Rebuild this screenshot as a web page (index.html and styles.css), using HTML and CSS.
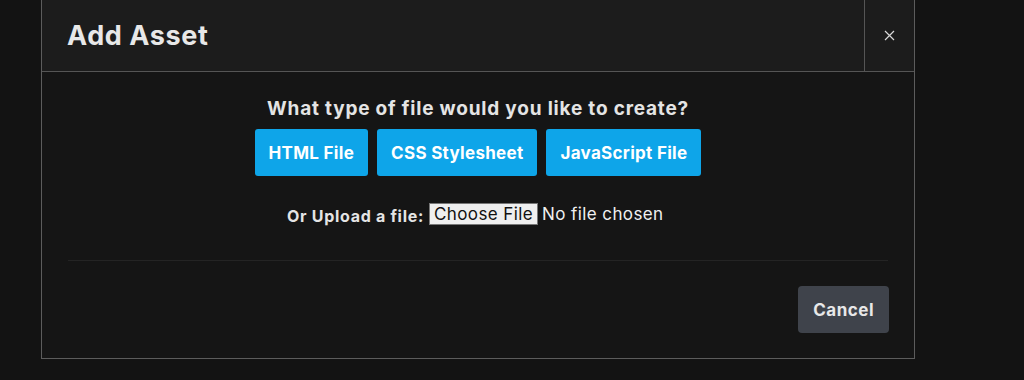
FILE: index.html
```html
<!DOCTYPE html>
<html lang="en">
<head>
  <meta charset="UTF-8">
  <title>Add Asset</title>
  <link rel="stylesheet" href="styles.css">
</head>
<body>

<div class="modal">
  <div class="modal-header">
    <h2>Add Asset</h2>
    <button class="close-btn" aria-label="Close">
      <svg width="11" height="11" viewBox="0 0 11 11"><path d="M1 1 L10 10 M10 1 L1 10" stroke="#d8d8d8" stroke-width="1.2" fill="none"/></svg>
    </button>
  </div>

  <div class="modal-body">
    <div class="question">What type of file would you like to create?</div>
    <div class="type-buttons">
      <button class="type-btn">HTML File</button>
      <button class="type-btn">CSS Stylesheet</button>
      <button class="type-btn">JavaScript File</button>
    </div>
    <div class="upload-row">
      <label for="upload">Or Upload a file:</label>
      <input type="file" id="upload">
    </div>
  </div>

  <div class="modal-footer">
    <button class="cancel-btn">Cancel</button>
  </div>
</div>

</body>
</html>
```

FILE: styles.css
```css
body {
  margin: 0;
  background: #131313;
  font-family: 'Inter', 'Liberation Sans', sans-serif;
  color: #e6e6e6;
}

.modal {
  margin: -1px 0 0 41px;
  width: 872px;
  background: #151515;
  border: 1px solid #5c5c5c;
}

.modal-header {
  display: flex;
  align-items: stretch;
  height: 72px;
  background: #1c1c1c;
  border-bottom: 1px solid #555;
  box-sizing: border-box;
}

.modal-header h2 {
  flex: 1;
  margin: 0;
  padding: 0 25px;
  display: flex;
  align-items: center;
  font-size: 27px;
  font-weight: 700;
  color: #e8e8e8;
  letter-spacing: 0.6px;
}

.close-btn {
  width: 50px;
  background: transparent;
  border: none;
  border-left: 1px solid #555;
  display: flex;
  align-items: center;
  justify-content: center;
  padding: 0;
  cursor: pointer;
}

.modal-body {
  display: flex;
  flex-direction: column;
  align-items: center;
  padding: 23px 26px 0;
}

.question {
  font-size: 19px;
  font-weight: 700;
  line-height: 27px;
  letter-spacing: 0.8px;
  color: #e4e4e4;
}

.type-buttons {
  display: flex;
  gap: 9px;
  margin-top: 7px;
}

.type-btn {
  height: 47px;
  padding: 0 14px;
  background: #0ea5e9;
  color: #fff;
  border: none;
  border-radius: 3px;
  font-family: inherit;
  font-size: 17px;
  font-weight: 700;
  letter-spacing: 0.3px;
  cursor: pointer;
}

.upload-row {
  display: flex;
  align-items: center;
  gap: 5px;
  margin-top: 26px;
  padding-bottom: 34px;
  width: 100%;
  justify-content: center;
  border-bottom: 1px solid #242424;
}

.upload-row label {
  font-size: 16px;
  font-weight: 700;
  letter-spacing: 0.7px;
  color: #e4e4e4;
  margin-top: 4px;
}

.upload-row input {
  width: 240px;
  font-family: inherit;
  font-size: 17px;
  letter-spacing: 0.4px;
  color: #f0f0f0;
}

.upload-row input::file-selector-button {
  font-family: inherit;
  font-size: 17px;
  letter-spacing: 0.4px;
  color: #111;
  background: #efefef;
  border: 1px solid #777;
  border-radius: 0;
  padding: 0 4px;
  margin-right: 4px;
}

.modal-footer {
  display: flex;
  justify-content: flex-end;
  padding: 25px 25px 25px;
}

.cancel-btn {
  height: 47px;
  padding: 0 15px;
  background: #3f434b;
  color: #e8e8e8;
  border: none;
  border-radius: 4px;
  font-family: inherit;
  font-size: 17px;
  font-weight: 700;
  letter-spacing: 0.5px;
  cursor: pointer;
}
```
